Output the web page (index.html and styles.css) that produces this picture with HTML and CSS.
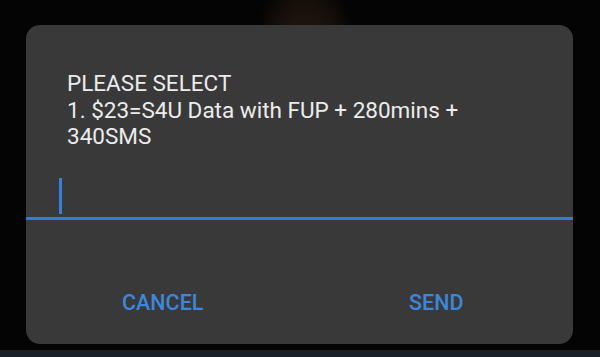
FILE: index.html
```html
<!DOCTYPE html>
<html lang="en">
<head>
    <meta charset="UTF-8">
    <meta name="viewport" content="width=device-width, initial-scale=1.0">
    <title>USSD</title>
    <link rel="stylesheet" href="styles.css">
</head>
<body>
    <div class="screen">
        <div class="dialog">
            <div class="message">
                PLEASE SELECT<br>
                1. $23=S4U Data with FUP + 280mins +<br>
                340SMS
            </div>
            <div class="input-row">
                <span class="cursor"></span>
            </div>
            <div class="actions">
                <button class="action-button">CANCEL</button>
                <button class="action-button">SEND</button>
            </div>
        </div>
    </div>
    <div class="nav-strip"></div>
</body>
</html>
```

FILE: styles.css
```css
body {
    margin: 0;
    padding: 0;
    background-color: #040404;
    font-family: Roboto, 'Liberation Sans', Arial, sans-serif;
    height: 357px;
    overflow: hidden;
    display: flex;
    flex-direction: column;
}

.screen {
    height: 350px;
    padding: 25px 27px 0 26px;
    box-sizing: border-box;
    background: radial-gradient(ellipse 50px 70px at 305px 45px, #22180f 0%, #17100a 60%, #040404 100%);
}

.dialog {
    height: 319px;
    background-color: #393939;
    border-radius: 14px;
    display: flex;
    flex-direction: column;
}

.message {
    padding: 45px 0 0 41px;
    font-size: 22.5px;
    line-height: 26.7px;
    color: #ececec;
}

.input-row {
    margin-top: 28px;
    height: 39px;
    padding-left: 33px;
    border-bottom: 3px solid #2f7dd6;
    display: flex;
    align-items: flex-start;
}

.cursor {
    display: block;
    width: 3px;
    height: 36px;
    background-color: #3580d8;
}

.actions {
    flex: 1;
    display: flex;
    align-items: flex-end;
    padding-bottom: 29px;
}

.action-button {
    flex: 1;
    background: none;
    border: none;
    padding: 0;
    font-family: Roboto, 'Liberation Sans', Arial, sans-serif;
    font-size: 21.5px;
    font-weight: 500;
    color: #3d87d9;
    text-align: center;
    cursor: pointer;
}

.nav-strip {
    height: 7px;
    background-color: #1a2028;
}
```
